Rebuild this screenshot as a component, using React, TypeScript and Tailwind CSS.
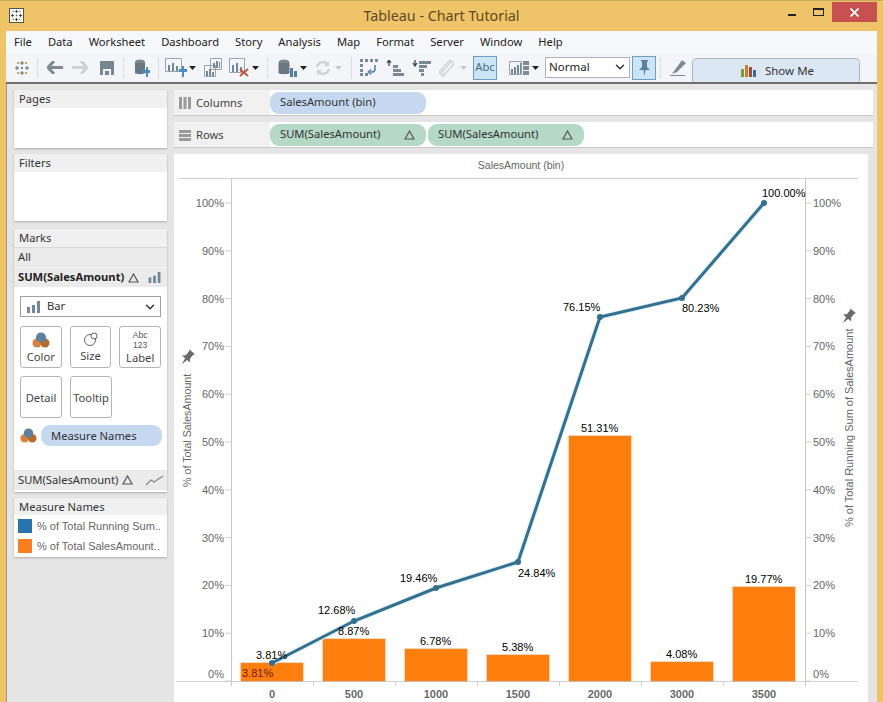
import React from "react";
import { ChevronDown } from "lucide-react";

const ui = "font-['Noto_Sans','Open_Sans',sans-serif]";

const ticks = [100, 90, 80, 70, 60, 50, 40, 30, 20, 10, 0];
const tickY = (v: number) => 681 - v * 4.78;

const bars = [
  { x: 241, top: 663, bin: "0" },
  { x: 323, top: 639, bin: "500" },
  { x: 405, top: 649, bin: "1000" },
  { x: 487, top: 655, bin: "1500" },
  { x: 569, top: 436, bin: "2000" },
  { x: 651, top: 662, bin: "3000" },
  { x: 733, top: 587, bin: "3500" },
];

const linePts = [
  [272, 663],
  [354, 621],
  [436, 588],
  [518, 562],
  [600, 317],
  [682, 298],
  [764, 203],
];

const labels = [
  { t: "3.81%", x: 256, y: 659 },
  { t: "3.81%", x: 242, y: 677, c: "#6e1a04" },
  { t: "12.68%", x: 318, y: 614 },
  { t: "8.87%", x: 338, y: 635 },
  { t: "19.46%", x: 400, y: 582 },
  { t: "6.78%", x: 420, y: 645 },
  { t: "24.84%", x: 518, y: 577 },
  { t: "5.38%", x: 502, y: 651 },
  { t: "51.31%", x: 581, y: 432 },
  { t: "76.15%", x: 563, y: 311 },
  { t: "80.23%", x: 682, y: 312 },
  { t: "4.08%", x: 666, y: 658 },
  { t: "19.77%", x: 745, y: 583 },
  { t: "100.00%", x: 762, y: 197 },
];

function Caret({ ml = 2, light = false }: { ml?: number; light?: boolean }) {
  return (
    <svg width="7" height="4" viewBox="0 0 7 4" className="shrink-0" style={{ marginLeft: ml }}>
      <path d="M0 0h7L3.5 4z" fill={light ? "#c8c8c8" : "#222"} />
    </svg>
  );
}

function Sep({ ml }: { ml: number }) {
  return <div className="w-px h-[22px] bg-[#dcdde0] shrink-0" style={{ marginLeft: ml }} />;
}

function BarsGlyph({ w = 13, h = 12, fill = "#71889c" }: { w?: number; h?: number; fill?: string }) {
  return (
    <svg width={w} height={h} viewBox="0 0 13 12" className="shrink-0">
      <rect x="0" y="6" width="3" height="6" fill={fill} />
      <rect x="5" y="4" width="3" height="8" fill={fill} />
      <rect x="10" y="0" width="3" height="12" fill={fill} />
    </svg>
  );
}

function Delta() {
  return (
    <svg width="11" height="10" viewBox="0 0 11 10" className="shrink-0">
      <path d="M5.5 1 1 9h9z" fill="none" stroke="#555" strokeWidth="1.2" />
    </svg>
  );
}

function TableauMark({ size = 16, c = "#6b6b6b" }: { size?: number; c?: string }) {
  return (
    <svg width={size} height={size} viewBox="0 0 16 16" className="shrink-0">
      <g stroke={c} strokeWidth="1">
        <path d="M8 1v4M6 3h4M8 11v4M6 13h4M3 6v4M1 8h4M13 6v4M11 8h4" />
      </g>
      <g stroke="#c2802e" strokeWidth="1">
        <path d="M4 2v2M3 3h2M12 2v2M11 3h2M4 12v2M3 13h2M12 12v2M11 13h2" />
      </g>
      <path d="M7 8h2M8 7v2" stroke="#3b5d86" strokeWidth="1" />
    </svg>
  );
}

function PanelHeader({ title }: { title: string }) {
  return <div className="h-[18px] bg-[#f0f0f0] pl-[5px] text-[11.2px] leading-[17px] text-[#333]">{title}</div>;
}

function MarkButton({ label, children, ml = 0 }: { label: string; children?: React.ReactNode; ml?: number }) {
  return (
    <div
      className="w-[42px] h-[42px] border border-[#b5b5b5] rounded-[3px] flex flex-col items-center justify-center bg-white"
      style={{ marginLeft: ml }}
    >
      {children}
      <span className="block h-[15px] text-[11.2px] leading-[15px] text-[#444]">{label}</span>
    </div>
  );
}

function ColorGlyph({ size = 18 }: { size?: number }) {
  return (
    <svg width={size} height={size} viewBox="0 0 18 18" className="shrink-0">
      <circle cx="5" cy="12" r="4.5" fill="#d9823a" />
      <circle cx="13" cy="12" r="4.5" fill="#b8692c" />
      <circle cx="9" cy="6.5" r="5" fill="#5f7f9f" />
    </svg>
  );
}

function Pill({ children, green = false, w }: { children: React.ReactNode; green?: boolean; w: string }) {
  return (
    <div className={`h-[22px] flex items-center justify-between ${w} pl-[10px] pr-[11px] text-[11.2px] text-[#333] rounded-l-[9px] rounded-r-[9px] ${green ? "bg-[#b6d8c6]" : "bg-[#c5d8ef]"}`}>
      {children}
    </div>
  );
}

function ShelfIcon({ kind }: { kind: "cols" | "rows" }) {
  return kind === "cols" ? (
    <svg width="12" height="12" viewBox="0 0 12 12" className="shrink-0">
      <path d="M0 0h3v12H0zM4.5 0h3v12h-3zM9 0h3v12H9z" fill="#9a9a9a" />
    </svg>
  ) : (
    <svg width="12" height="11" viewBox="0 0 12 11" className="shrink-0">
      <path d="M0 0h12v3H0zM0 4h12v3H0zM0 8h12v3H0z" fill="#9a9a9a" />
    </svg>
  );
}

function Pin({ x, y }: { x: number; y: number }) {
  return (
    <g transform={`translate(${x} ${y}) rotate(40) scale(1.35)`}>
      <path d="M-3-6h6l-1 1v4l2 2h-3l-1 5-1-5h-3l2-2v-4z" fill="#6a6a6a" />
    </g>
  );
}

function Toolbar() {
  return (
    <div className="relative h-[29px] flex items-center pl-[8px] bg-[#f4f5f8]">
      <TableauMark />
      <Sep ml={7} />
      {/* back / forward / save */}
      <svg width="16" height="13" viewBox="0 0 16 13" className="ml-[9px] shrink-0">
        <path d="M7 0 1 6.5 7 13M1 6.5h15" fill="none" stroke="#7d8a92" strokeWidth="3" />
      </svg>
      <svg width="16" height="13" viewBox="0 0 16 13" className="ml-[9px] shrink-0">
        <path d="M9 0l6 6.5L9 13M15 6.5H0" fill="none" stroke="#cfd2d5" strokeWidth="3" />
      </svg>
      <svg width="14" height="14" viewBox="0 0 14 14" className="ml-[12px] shrink-0">
        <path d="M0 0h14v14H0z" fill="#78858e" />
        <path d="M3 8h8v6H3z" fill="#f4f5f8" />
        <path d="M5 10h4v4H5z" fill="#78858e" />
      </svg>
      <Sep ml={9} />
      <svg width="16" height="18" viewBox="0 0 16 18" className="ml-[10px] shrink-0">
        <ellipse cx="6" cy="3" rx="5" ry="2.5" fill="#7c8a94" />
        <path d="M1 4v10c0 1.5 10 1.5 10 0V4z" fill="#6a7882" />
        <path d="M9 11h3V8h2v3h2v3h-2v4h-2v-4H9z" fill="#4a8cc4" />
      </svg>
      <Sep ml={8} />
      {/* sheet buttons */}
      <svg width="22" height="19" viewBox="0 0 22 19" className="ml-[6px] shrink-0">
        <path d="M.5.5h16v13H.5z" fill="none" stroke="#9aa4ac" />
        <path d="M3 7h2v6H3zM7 5h2v8H7zM11 8h2v5h-2z" fill="#71889c" />
        <path d="M14 11h3V8h2v3h3v3h-3v5h-2v-5h-3z" fill="#4a8cc4" />
      </svg>
      <Caret />
      <svg width="18" height="19" viewBox="0 0 18 19" className="ml-[8px] shrink-0">
        <path d="M6.500.5h11v11h-11zM.5 7.500h11v11H.5z" fill="#f4f5f8" stroke="#9aa4ac" />
        <path d="M9 5h2v5H9zM12 3h2v7h-2zM15 4h1v6h-1z" fill="#71889c" />
        <path d="M2 13h2v5H2zM5 11h2v7H5zM8 14h2v4H8z" fill="#71889c" />
      </svg>
      <svg width="20" height="19" viewBox="0 0 20 19" className="ml-[7px] shrink-0">
        <path d="M.5.500h15v14H.5z" fill="none" stroke="#9aa4ac" />
        <path d="M3 7h2v7H3zM7 5h2v9H7zM11 9h2v5h-2z" fill="#71889c" />
        <path d="M11 11l8 7M19 11l-8 7" stroke="#c7583f" strokeWidth="2" />
      </svg>
      <Caret ml={3} />
      <Sep ml={8} />
      {/* data source / refresh */}
      <svg width="19" height="18" viewBox="0 0 19 18" className="ml-[10px] shrink-0">
        <ellipse cx="6" cy="3" rx="5.500" ry="2.500" fill="#7c8a94" />
        <path d="M.5 4v10c0 1.600 11 1.600 11 0V4z" fill="#6a7882" />
        <path d="M12 9h3v9h-3zM16 12h3v6h-3z" fill="#4f7ea8" />
      </svg>
      <Caret ml={3} />
      <svg width="16" height="16" viewBox="0 0 16 16" className="ml-[8px] shrink-0">
        <path d="M2 7a6 6 0 0 1 11-2M14 9a6 6 0 0 1-11 2" fill="none" stroke="#cfd2d5" strokeWidth="2.500" />
        <path d="M14 1v5h-5zM2 15v-5h5z" fill="#cfd2d5" />
      </svg>
      <Caret ml={4} light />
      <Sep ml={9} />
      {/* swap / sort */}
      <svg width="18" height="17" viewBox="0 0 18 17" className="ml-[8px] shrink-0">
        <path d="M0 0h3v3H0zM5 0h3v3H5zM10 0h3v3h-3zM15 0h3v3h-3zM0 5h3v3H0zM0 10h3v3H0zM0 14h3v3H0zM5 14h3v3H5z" fill="#7c8a94" />
        <path d="M15 6v4a3 3 0 0 1-3 3h-2M8 13l3-2.500M8 13l3 2.500" fill="none" stroke="#4f7ea8" strokeWidth="1.500" />
      </svg>
      <svg width="18" height="16" viewBox="0 0 18 16" className="ml-[8px] shrink-0">
        <path d="M3 6V1M1 3l2-3 2 3" fill="none" stroke="#444" strokeWidth="1.300" />
        <path d="M7 5h5v3H7zM7 9h8v3H7zM7 13h11v3H7z" fill="#7c8a94" />
      </svg>
      <svg width="19" height="16" viewBox="0 0 19 16" className="ml-[8px] shrink-0">
        <path d="M3 0v5M1 3l2 3 2-3" fill="none" stroke="#444" strokeWidth="1.300" />
        <path d="M7 1h12v3H7zM7 5h8v3H7zM7 9h5v3H7zM9 13h3v3H9z" fill="#7c8a94" />
      </svg>
      <svg width="17" height="18" viewBox="0 0 17 18" className="ml-[6px] shrink-0">
        <path d="M14 3 5 13a2 2 0 0 0 3 2l8-9a3 3 0 0 0-4-4L3 12a4 4 0 0 0 5 5" fill="none" stroke="#d2d4d6" strokeWidth="1.500" />
      </svg>
      <Caret ml={6} light />
      {/* Abc toggle */}
      <div className="ml-[6px] w-[24px] h-[24px] border border-[#6f9ec4] bg-[#cde4f7] flex items-center justify-center text-[11.2px] text-[#4a6a85] shrink-0">Abc</div>
      <svg width="20" height="14" viewBox="0 0 20 14" className="ml-[12px] shrink-0">
        <path d="M.5.500h12v13H.5z" fill="none" stroke="#9aa4ac" />
        <path d="M2 8h2v5H2zM5 6h2v7H5zM8 4h2v9H8zM11 2h1v11h-1z" fill="#71889c" />
        <path d="M14 0h6v4h-6zM14 5h6v4h-6zM14 10h6v4h-6z" fill="#7c8a94" />
      </svg>
      <Caret ml={3} />
      {/* fit select */}
      <div className="ml-[6px] w-[85px] h-[21px] border border-[#a9b4bf] bg-white flex items-center justify-between pl-[3px] pr-[2px] pb-[1px] text-[11.5px] text-[#222] shrink-0">
        Normal
        <ChevronDown size={14} strokeWidth={2.5} className="text-[#333]" />
      </div>
      <div className="ml-[2px] w-[24px] h-[24px] border border-[#6f9ec4] bg-[#cde4f7] flex items-center justify-center shrink-0">
        <svg width="11" height="16" viewBox="0 0 11 16">
          <path d="M2 0h7v1L8 2v5l3 3H6.500L5.500 16l-1-6H0l3-3V2L2 1z" fill="#5b7f9c" />
        </svg>
      </div>
      <Sep ml={4} />
      <svg width="16" height="16" viewBox="0 0 16 16" className="ml-[9px] shrink-0">
        <path d="M12 0l4 3-9 9-5 2z" fill="#7c8a94" />
        <path d="M0 15.500h15" stroke="#7c8a94" strokeWidth="1" />
      </svg>
      {/* Show Me tab, hangs over the dark rule */}
      <div className="absolute left-[686px] top-[5px] w-[168px] h-[26px] border border-b-0 border-[#aeb7c0] rounded-t-[5px] bg-[#dbe8f3] flex items-center justify-center gap-[8px] pl-[3px] pb-[2px] text-[11.5px] text-[#333]">
        <svg width="16" height="13" viewBox="0 0 16 13" className="shrink-0">
          <rect x="0" y="5" width="3" height="8" fill="#7a9b3c" />
          <rect x="4" y="1" width="3" height="12" fill="#c2802e" />
          <rect x="8" y="3" width="3" height="10" fill="#b3452c" />
          <rect x="12" y="6" width="3" height="7" fill="#3e6d99" />
        </svg>
        Show Me
      </div>
    </div>
  );
}

function Chart() {
  return (
    <svg width="688" height="524" viewBox="174 178 688 524" className="block">
      <style>{`text { font-family: "Liberation Sans", Arial, sans-serif; }`}</style>
      <path d="M178 178.500H858M176 681.500H858" stroke="#cfcfd4" />
      <path d="M231.500 178V686M805.500 178V686" stroke="#c8c8c8" />
      {ticks.map((v) => (
        <g key={v}>
          <path d={`M225 ${tickY(v)}h6M805 ${tickY(v)}h6`} stroke="#d0d0d0" />
          <text x="224" y={v === 0 ? 678 : tickY(v) + 4} textAnchor="end" fontSize="11" fill="#666">{v}%</text>
          <text x="813" y={v === 0 ? 678 : tickY(v) + 4} fontSize="11" fill="#666">{v}%</text>
        </g>
      ))}
      {[313, 395, 477, 559, 641, 723].map((x) => (
        <path key={x} d={`M${x + 0.5} 681v5`} stroke="#d0d0d0" />
      ))}
      {bars.map((b) => (
        <g key={b.bin}>
          <rect x={b.x - 2} y={b.top - 1} width="66" height={682 - b.top} fill="#fff5e4" />
          <rect x={b.x} y={b.top} width="62" height={681 - b.top} fill="#ff7f0e" stroke="#d98a45" strokeWidth="0.6" />
          <text x={b.x + 31} y="698" textAnchor="middle" fontSize="11" fontWeight="700" fill="#6a6a6a">{b.bin}</text>
        </g>
      ))}
      <polyline points={linePts.map((p) => p.join(",")).join(" ")} fill="none" stroke="#dff1fb" strokeWidth="5" />
      <polyline points={linePts.map((p) => p.join(",")).join(" ")} fill="none" stroke="#33708f" strokeWidth="3" />
      {linePts.map(([x, y]) => (
        <circle key={x} cx={x} cy={y} r="3" fill="#33708f" />
      ))}
      {labels.map((l) => (
        <text key={l.t + l.x} x={l.x} y={l.y} fontSize="11" fill={l.c ?? "#000"}>{l.t}</text>
      ))}
      <text transform="translate(191 487) rotate(-90)" fontSize="10.7" fill="#666">% of Total SalesAmount</text>
      <text transform="translate(853 527) rotate(-90)" fontSize="11" fill="#666">% of Total Running Sum of SalesAmount</text>
      <Pin x={187} y={358} />
      <Pin x={848} y={317} />
    </svg>
  );
}

export default function App() {
  return (
    <div className={`${ui} w-[883px] h-[702px] overflow-hidden bg-[#efc368] flex flex-col`}>
      {/* title bar */}
      <div className="relative h-[31px] shrink-0 flex items-center justify-center border-t border-[#c9a85f] text-[14.3px] text-[#5d4a22]">
        <div className="absolute left-[9px] top-[7px] w-[15px] h-[15px] border border-[#555] bg-white flex items-center justify-center">
          <TableauMark size={13} c="#333" />
        </div>
        Tableau - Chart Tutorial
        <div className="absolute right-[6px] top-[1px] flex items-start">
          <div className="mt-[12px] w-[8px] h-[2px] bg-[#222]" />
          <div className="ml-[17px] mt-[6px] w-[11px] h-[8px] border border-[#222] border-t-[2px]" />
          <div className="ml-[8px] w-[45px] h-[20px] bg-[#c75050] flex items-center justify-center text-white">
            <svg width="9" height="9" viewBox="0 0 9 9">
              <path d="M.5.500l8 8M8.500.500l-8 8" stroke="#fff" strokeWidth="1.800" />
            </svg>
          </div>
        </div>
      </div>

      {/* window body */}
      <div className="flex-1 min-h-0 mx-[6px] flex flex-col">
        <div className="h-[22px] shrink-0 flex items-center gap-[16px] pl-[8px] bg-[#f6f8fc] text-[11.2px] text-[#222]">
          {["File", "Data", "Worksheet", "Dashboard", "Story", "Analysis", "Map", "Format", "Server", "Window", "Help"].map((m) => (
            <span key={m}>{m}</span>
          ))}
        </div>
        <Toolbar />
        <div className="h-[2px] shrink-0 bg-[#6f6f6f] relative z-10" />

        <div className="flex-1 min-h-0 bg-[#e5e5e5] pl-[7px] pt-[6px] flex gap-[7px] border-l border-[#9a9a9a]">
          {/* left cards */}
          <div className="w-[153px] shrink-0 flex flex-col">
            <div className="h-[58px] bg-white shadow-[0_1px_2px_rgba(0,0,0,0.25)]">
              <PanelHeader title="Pages" />
            </div>
            <div className="mt-[6px] h-[67px] bg-white shadow-[0_1px_2px_rgba(0,0,0,0.25)]">
              <PanelHeader title="Filters" />
            </div>
            <div className="mt-[8px] h-[263px] bg-white shadow-[0_1px_2px_rgba(0,0,0,0.25)] flex flex-col">
              <PanelHeader title="Marks" />
              <div className="h-[20px] bg-[#ebebeb] border-t border-[#d8d8d8] pl-[4px] text-[11.2px] leading-[17px] text-[#333]">All</div>
              <div className="h-[20px] bg-[#ebebeb] border-t border-[#f5f5f5] flex items-center pl-[4px] pr-[6px] text-[11.2px] font-bold text-[#222] whitespace-nowrap">
                SUM(SalesAmount)
                <span className="ml-[4px]"><Delta /></span>
                <span className="ml-auto"><BarsGlyph w={13} h={11} /></span>
              </div>
              <div className="mt-[9px] mx-[6px] h-[21px] border border-[#a0a0a0] flex items-center pl-[6px] pr-[3px] text-[11.2px] text-[#333]">
                <BarsGlyph />
                <span className="ml-[7px]">Bar</span>
                <ChevronDown size={14} strokeWidth={2.5} className="ml-auto text-[#333]" />
              </div>
              <div className="mt-[9px] mx-[6px] flex">
                <MarkButton label="Color"><ColorGlyph /></MarkButton>
                <MarkButton label="Size" ml={8}>
                  <svg width="14" height="14" viewBox="0 0 14 14" className="shrink-0 mb-[2px]">
                    <circle cx="6" cy="8" r="5.500" fill="none" stroke="#666" />
                    <circle cx="10" cy="4" r="3" fill="#fff" stroke="#666" />
                  </svg>
                </MarkButton>
                <MarkButton label="Label" ml={8}>
                  <span className="block h-[10px] font-['Liberation_Sans',sans-serif] text-[8.5px] leading-[10px] text-[#555]">Abc</span>
                  <span className="block h-[10px] font-['Liberation_Sans',sans-serif] text-[8.5px] leading-[10px] text-[#555]">123</span>
                </MarkButton>
              </div>
              <div className="mt-[8px] mx-[6px] flex">
                <MarkButton label="Detail" />
                <MarkButton label="Tooltip" ml={8} />
              </div>
              <div className="mt-[7px] ml-[6px] mr-[5px] flex items-center">
                <ColorGlyph size={17} />
                <div className="ml-[4px] flex-1 h-[21px] bg-[#c5d8ef] rounded-[9px] pl-[10px] text-[11.2px] leading-[21px] text-[#333]">Measure Names</div>
              </div>
              <div className="mt-auto mb-[2px] h-[20px] bg-[#ebebeb] flex items-center pl-[4px] pr-[3px] text-[11.2px] text-[#333] whitespace-nowrap">
                SUM(SalesAmount)
                <span className="ml-[4px]"><Delta /></span>
                <svg width="18" height="11" viewBox="0 0 18 11" className="ml-auto shrink-0">
                  <path d="M0 10l5-5 3 2 9-6" fill="none" stroke="#8a8a8a" strokeWidth="1.300" />
                </svg>
              </div>
            </div>
            <div className="mt-[6px] h-[59px] bg-white shadow-[0_1px_2px_rgba(0,0,0,0.25)]">
              <div className="h-[17px] bg-[#f0f0f0] pl-[5px] text-[11.2px] leading-[18px] text-[#333]">Measure Names</div>
              <div className="mt-[4px] h-[14px] flex items-center pl-[4px] whitespace-nowrap overflow-hidden">
                <div className="w-[14px] h-[14px] bg-[#2a74ae] shrink-0" />
                <span className="ml-[5px] font-['Liberation_Sans',sans-serif] text-[11px] leading-[14px] text-[#666]">% of Total Running Sum..</span>
              </div>
              <div className="mt-[6px] h-[14px] flex items-center pl-[4px] whitespace-nowrap overflow-hidden">
                <div className="w-[14px] h-[14px] bg-[#fb7f1e] shrink-0" />
                <span className="ml-[5px] font-['Liberation_Sans',sans-serif] text-[11px] leading-[14px] text-[#666]">% of Total SalesAmount..</span>
              </div>
            </div>
          </div>

          {/* shelves and view */}
          <div className="flex-1 min-w-0 flex flex-col pr-[9px]">
            <div className="mr-[-5px] h-[26px] bg-white border-b border-[#c8c8c8] flex items-center shrink-0">
              <div className="w-[96px] h-full bg-[#f1f1f1] flex items-center pl-[5px] pt-[1px] gap-[5px] text-[11.2px] text-[#444]">
                <ShelfIcon kind="cols" />
                Columns
              </div>
              <Pill w="w-[156px]">SalesAmount (bin)</Pill>
            </div>
            <div className="mt-[6px] mr-[-5px] h-[26px] bg-white border-b border-[#c8c8c8] flex items-center shrink-0">
              <div className="w-[96px] h-full bg-[#f1f1f1] flex items-center pl-[5px] pt-[1px] gap-[5px] text-[11.2px] text-[#444]">
                <ShelfIcon kind="rows" />
                Rows
              </div>
              <Pill green w="w-[156px]">SUM(SalesAmount)<Delta /></Pill>
              <div className="ml-[2px]">
                <Pill green w="w-[156px]">SUM(SalesAmount)<Delta /></Pill>
              </div>
            </div>
            <div className="mt-[6px] flex-1 min-h-0 bg-white overflow-hidden">
              <div className="h-[24px] flex items-center justify-center font-['Liberation_Sans',sans-serif] text-[10.5px] text-[#666]">SalesAmount (bin)</div>
              <Chart />
            </div>
          </div>
        </div>
      </div>
    </div>
  );
}
